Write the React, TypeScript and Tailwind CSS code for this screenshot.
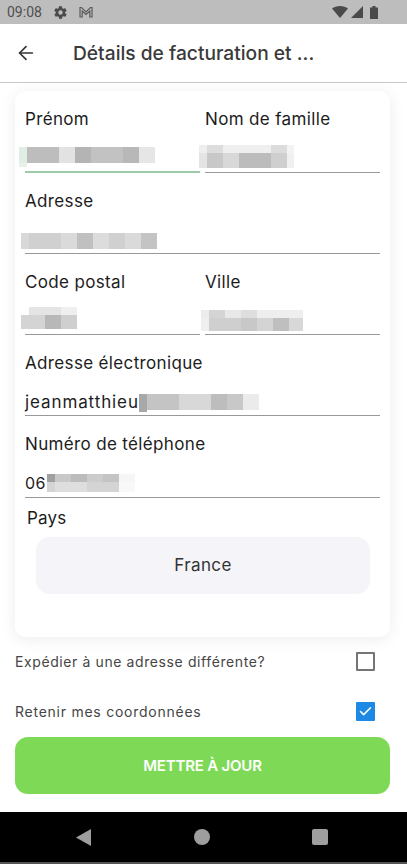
import { ReactNode } from 'react';
import { ArrowLeft, Check } from 'lucide-react';

// one row of blurred cells: [width, colour]
type Row = { h: number; cells: [number, string][] };

const prenom: Row[] = [
  { h: 16, cells: [[8, '#e0efe5'], [32, '#bdbdbd'], [16, '#e2e2e2'], [16, '#b4b4b4'], [32, '#c2c2c2'], [16, '#b8b8b8'], [16, '#e6e6e6']] },
  { h: 4, cells: [[8, '#e6f2ea']] },
];
const nom: Row[] = [
  { h: 8, cells: [[8, '#eeeeee'], [16, '#dddddd'], [48, '#efefef'], [16, '#dcdcdc'], [7, '#f3f3f3']] },
  { h: 15, cells: [[8, '#e4e4e4'], [16, '#c8c8c8'], [16, '#d8d8d8'], [32, '#bcbcbc'], [16, '#cfcfcf'], [7, '#f0f0f0']] },
];
const adresse: Row[] = [
  { h: 16, cells: [[8, '#d8d8d8'], [32, '#d0d0d0'], [16, '#dadada'], [16, '#c0c0c0'], [16, '#dcdcdc'], [16, '#d0d0d0'], [16, '#dadada'], [16, '#c4c4c4']] },
];
const codePostal: Row[] = [
  { h: 8, cells: [[8, '#ffffff'], [32, '#e4e4e4'], [16, '#efefef']] },
  { h: 14, cells: [[24, '#d4d4d4'], [16, '#b8b8b8'], [16, '#cfcfcf']] },
];
const ville: Row[] = [
  { h: 8, cells: [[8, '#ececec'], [16, '#d4d4d4'], [16, '#e8e8e8'], [16, '#dedede'], [46, '#eeeeee']] },
  { h: 13, cells: [[8, '#efefef'], [32, '#cfcfcf'], [16, '#c8c8c8'], [16, '#d4d4d4'], [16, '#bfbfbf'], [14, '#d8d8d8']] },
];
const email: Row[] = [
  { h: 16, cells: [[8, '#a8a8a8'], [32, '#c4c4c4'], [32, '#d8d8d8'], [16, '#bdbdbd'], [16, '#c8c8c8'], [16, '#ebebeb']] },
  { h: 2, cells: [[8, '#a8a8a8']] },
];
const phone: Row[] = [
  { h: 8, cells: [[8, '#a0a0a0'], [16, '#c8c8c8'], [16, '#bcbcbc'], [16, '#cccccc'], [16, '#c4c4c4'], [16, '#f6f6f6']] },
  { h: 10, cells: [[8, '#d4d4d4'], [32, '#dedede'], [32, '#d4d4d4'], [16, '#f8f8f8']] },
];

function Mosaic({ rows }: { rows: Row[] }) {
  return (
    <div className="flex flex-col">
      {rows.map((row, i) => (
        <div key={i} className="flex" style={{ height: row.h }}>
          {row.cells.map(([w, c], j) => (
            <div key={j} style={{ width: w, backgroundColor: c }} />
          ))}
        </div>
      ))}
    </div>
  );
}

function Field({ label, children, active, pb, box }: { label: string; children: ReactNode; active?: boolean; pb: string; box: string }) {
  return (
    <div className={`flex flex-1 flex-col justify-between ${box}`}>
      <div className="text-[17px] leading-6 tracking-[0.35px] text-[#1c1c1c]">{label}</div>
      <div className={active ? `border-b-2 border-[#9ccba8] ${pb}` : `border-b border-[#999999] ${pb}`}>{children}</div>
    </div>
  );
}

function Checkbox({ checked }: { checked?: boolean }) {
  if (checked) {
    return (
      <div className="flex h-[19px] w-[19px] items-center justify-center rounded-[1px] bg-[#1e88e5]">
        <Check size={15} strokeWidth={2.5} className="text-white" />
      </div>
    );
  }
  return <div className="h-[19px] w-[19px] rounded-[1px] border-2 border-[#757575]" />;
}

export default function App() {
  return (
    <div className="flex h-[864px] w-[407px] flex-col overflow-hidden bg-white font-['Inter',sans-serif]">
      {/* Status bar */}
      <div className="flex h-6 items-center justify-between bg-[#bdbdbd] pl-[7px] pr-[29px]">
        <div className="flex items-center gap-[11px]">
          <span className="font-['Roboto',sans-serif] text-[14px] text-[#4f4f4f]">09:08</span>
          <svg width="15" height="15" viewBox="0 0 24 24" fill="#4a4a4a">
            <path d="M19.4 13c.1-.3.1-.7.1-1s0-.7-.1-1l2.1-1.6c.2-.2.2-.4.1-.6l-2-3.5c-.1-.2-.4-.3-.6-.2l-2.5 1c-.5-.4-1.1-.7-1.7-1l-.4-2.6c0-.3-.2-.4-.5-.4h-4c-.2 0-.5.2-.5.4l-.4 2.6c-.6.3-1.2.6-1.7 1l-2.5-1c-.2-.1-.5 0-.6.2l-2 3.5c-.1.2-.1.5.1.6L4.5 11c-.1.3-.1.7-.1 1s0 .7.1 1l-2.1 1.6c-.2.2-.2.4-.1.6l2 3.5c.1.2.4.3.6.2l2.5-1c.5.4 1.1.7 1.7 1l.4 2.6c0 .2.3.4.5.4h4c.3 0 .5-.2.5-.4l.4-2.6c.6-.3 1.2-.6 1.7-1l2.5 1c.2.1.5 0 .6-.2l2-3.5c.1-.2.1-.5-.1-.6L19.4 13zM12 15.5A3.5 3.5 0 1 1 12 8.5a3.5 3.5 0 0 1 0 7z" />
          </svg>
          <svg width="14" height="12" viewBox="0 0 14 12" fill="none" stroke="#5a5a5a" strokeWidth="1.2">
            <path d="M1 1.5h1.5L7 6l4.5-4.5H13V11h-2.2V5L7 8.500 3.200 5v6H1z" />
          </svg>
        </div>
        <div className="flex items-center gap-[3px]">
          <svg width="16" height="12" viewBox="0 0 16 12" fill="#4a4a4a">
            <path d="M0 2.500C2 .9 4.800 0 8 0s6 .9 8 2.500L8 12z" />
          </svg>
          <svg width="12" height="12" viewBox="0 0 12 12" fill="#4a4a4a">
            <path d="M12 0v12H0z" />
          </svg>
          <svg width="8" height="13" viewBox="0 0 8 13" fill="#4a4a4a" className="ml-[4px]">
            <path d="M2.500 0h3v1.500H8V13H0V1.500h2.500z" />
          </svg>
        </div>
      </div>

      {/* Header */}
      <div className="flex h-[59px] items-center border-b border-[#c8c8c8] pl-[15px]">
        <ArrowLeft size={22} strokeWidth={1.8} className="text-[#333333]" />
        <div className="ml-[36px] text-[19.2px] font-medium text-[#3a3a3a]">Détails de facturation et ...</div>
      </div>

      {/* Form card */}
      <div className="ml-[15px] mr-[17px] mt-2 flex h-[546px] flex-col rounded-[10px] bg-white px-[10px] pt-px shadow-[0_2px_16px_rgba(0,0,0,0.08)]">
        <div className="flex gap-[5px]">
          <Field label="Prénom" active pb="pb-[4px]" box="h-[81px] pt-[15px]">
            <div className="-ml-[6px]"><Mosaic rows={prenom} /></div>
          </Field>
          <Field label="Nom de famille" pb="pb-[4px]" box="h-[81px] pt-[15px]">
            <div className="-ml-[6px]"><Mosaic rows={nom} /></div>
          </Field>
        </div>
        <div className="flex">
          <Field label="Adresse" pb="pb-[4px]" box="h-[81px] pt-[16px]">
            <div className="-ml-[4px]"><Mosaic rows={adresse} /></div>
          </Field>
        </div>
        <div className="flex gap-[5px]">
          <Field label="Code postal" pb="pb-[5px]" box="h-[81px] pt-[16px]">
            <div className="-ml-[4px]"><Mosaic rows={codePostal} /></div>
          </Field>
          <Field label="Ville" pb="pb-[3px]" box="h-[81px] pt-[16px]">
            <div className="-ml-[4px]"><Mosaic rows={ville} /></div>
          </Field>
        </div>
        <div className="flex">
          <Field label="Adresse électronique" pb="pb-[3px]" box="h-[81px] pt-[16px]">
            <div className="flex items-start text-[17px] leading-[16px] tracking-[0.9px] text-[#1c1c1c]">
              <span className="w-[114px]">jeanmatthieu</span>
              <Mosaic rows={email} />
            </div>
          </Field>
        </div>
        <div className="flex">
          <Field label="Numéro de téléphone" pb="pb-[4px]" box="h-[82px] pt-[16px]">
            <div className="flex items-center text-[16px] leading-5 tracking-[0.4px] text-[#1c1c1c]">
              <span className="w-[22px]">06</span>
              <Mosaic rows={phone} />
            </div>
          </Field>
        </div>
        <div className="ml-[2px] mt-[8px] text-[17px] leading-6 tracking-[0.2px] text-[#1c1c1c]">Pays</div>
        <div className="ml-[11px] mt-[7px] flex h-[57px] w-[334px] items-center justify-center rounded-[14px] bg-[#f4f4f9] pt-px text-[17px] tracking-[0.4px] text-[#333333]">
          France
        </div>
      </div>

      {/* Options */}
      <div className="mt-[15px] flex h-[19px] items-center justify-between pl-[15px] pr-[32px]">
        <span className="text-[14px] tracking-[0.6px] text-[#454545]">Expédier à une adresse différente?</span>
        <Checkbox />
      </div>
      <div className="mt-[31px] flex h-[19px] items-center justify-between pl-[15px] pr-[32px]">
        <span className="text-[14px] tracking-[0.75px] text-[#454545]">Retenir mes coordonnées</span>
        <Checkbox checked />
      </div>

      <button className="ml-[15px] mr-[17px] mt-[16px] flex h-[57px] items-center justify-center rounded-[13px] bg-[#7ed957] pt-[2px] text-[15px] font-semibold tracking-[-0.2px] text-white">
        METTRE À JOUR
      </button>

      {/* Navigation bar */}
      <div className="mt-[18px] flex h-[52px] items-center border-b-2 border-[#555555] bg-black">
        <svg width="15" height="17" viewBox="0 0 15 17" fill="#9e9e9e" className="ml-[76px]">
          <path d="M15 0v17L0 8.500z" />
        </svg>
        <div className="ml-[103px] h-[16px] w-[16px] rounded-full bg-[#9e9e9e]" />
        <div className="ml-[102px] h-[16px] w-[16px] rounded-[2px] bg-[#9e9e9e]" />
      </div>
    </div>
  );
}
